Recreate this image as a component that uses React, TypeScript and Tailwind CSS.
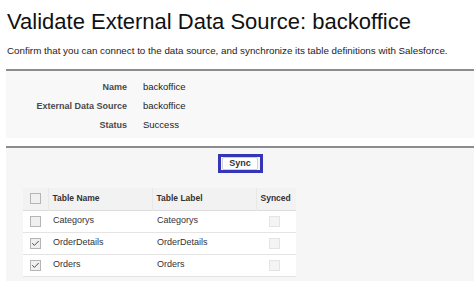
import { Check } from "lucide-react";

type Row = { name: string; label: string; checked: boolean };

const rows: Row[] = [
  { name: "Categorys", label: "Categorys", checked: false },
  { name: "OrderDetails", label: "OrderDetails", checked: true },
  { name: "Orders", label: "Orders", checked: true },
];

const details = [
  { label: "Name", value: "backoffice" },
  { label: "External Data Source", value: "backoffice" },
  { label: "Status", value: "Success" },
];

function Box({ checked, disabled }: { checked?: boolean; disabled?: boolean }) {
  return (
    <span
      className={`flex h-[11px] w-[11px] items-center justify-center border ${
        disabled ? "border-[#e4e4e4] bg-[#f4f4f4]" : "border-[#b5b5b5] bg-[#f0f0f0]"
      }`}
    >
      {checked && <Check className="h-[9px] w-[9px] text-[#444]" strokeWidth={2.5} />}
    </span>
  );
}

function App() {
  return (
    <div className="h-[281px] w-[474px] overflow-hidden bg-white font-['Liberation_Sans',Arial,sans-serif] text-[#222]">
      <h1 className="pl-[7px] pt-[9px] text-[22px] leading-[26px] text-[#111]">
        Validate External Data Source: backoffice
      </h1>
      <p className="mt-[9px] whitespace-nowrap pl-[7px] text-[9.8px] leading-[14px] text-[#222]">
        Confirm that you can connect to the data source, and synchronize its table definitions with Salesforce.
      </p>

      {/* Details panel */}
      <div className="ml-[6px] mt-[11px] h-[69px] border-t-2 border-[#8c8c90] bg-[#f8f8f8] pt-[7px]">
        {details.map((d) => (
          <div key={d.label} className="flex h-[19px] items-center">
            <span className="w-[121px] text-right text-[9px] font-bold text-[#4a4a4a]">{d.label}</span>
            <span className="pl-[16px] text-[9.5px] text-[#222]">{d.value}</span>
          </div>
        ))}
      </div>

      {/* Sync + tables panel */}
      <div className="ml-[6px] mt-[8px] h-[140px] border-t-2 border-[#8c8c90] bg-[#f6f6f6] pt-[6px]">
        <div className="flex justify-center">
          <div className="flex h-[19px] w-[45px] items-center justify-center border-[3px] border-[#3535b8]">
            <button className="flex h-[13px] items-center rounded-[2px] border border-[#d0d0d0] bg-white px-[6px] text-[9px] font-bold text-[#333]">
              Sync
            </button>
          </div>
        </div>

        <table className="ml-[17px] mt-[15px] w-[273px] border-collapse text-[9px]">
          <thead>
            <tr className="h-[22px] border-b border-[#dcdcdc] bg-[#f2f2f2] text-left text-[8.5px] font-bold text-[#333]">
              <th className="w-[25px] pl-[7px]">
                <Box />
              </th>
              <th className="w-[104px] border-l border-[#e8e8e8] pl-[4px]">Table Name</th>
              <th className="w-[104px] border-l border-[#e8e8e8] pl-[4px]">Table Label</th>
              <th className="border-l border-[#e8e8e8] pl-[4px]">Synced</th>
            </tr>
          </thead>
          <tbody>
            {rows.map((r) => (
              <tr key={r.name} className="h-[22px] border-b border-[#e4e4e4] bg-white">
                <td className="pl-[7px]">
                  <Box checked={r.checked} />
                </td>
                <td className="pl-[5px] text-[#333]">{r.name}</td>
                <td className="pl-[5px] text-[#333]">{r.label}</td>
                <td className="pl-[13px]">
                  <Box disabled />
                </td>
              </tr>
            ))}
          </tbody>
        </table>
      </div>
    </div>
  );
}

export default App;
